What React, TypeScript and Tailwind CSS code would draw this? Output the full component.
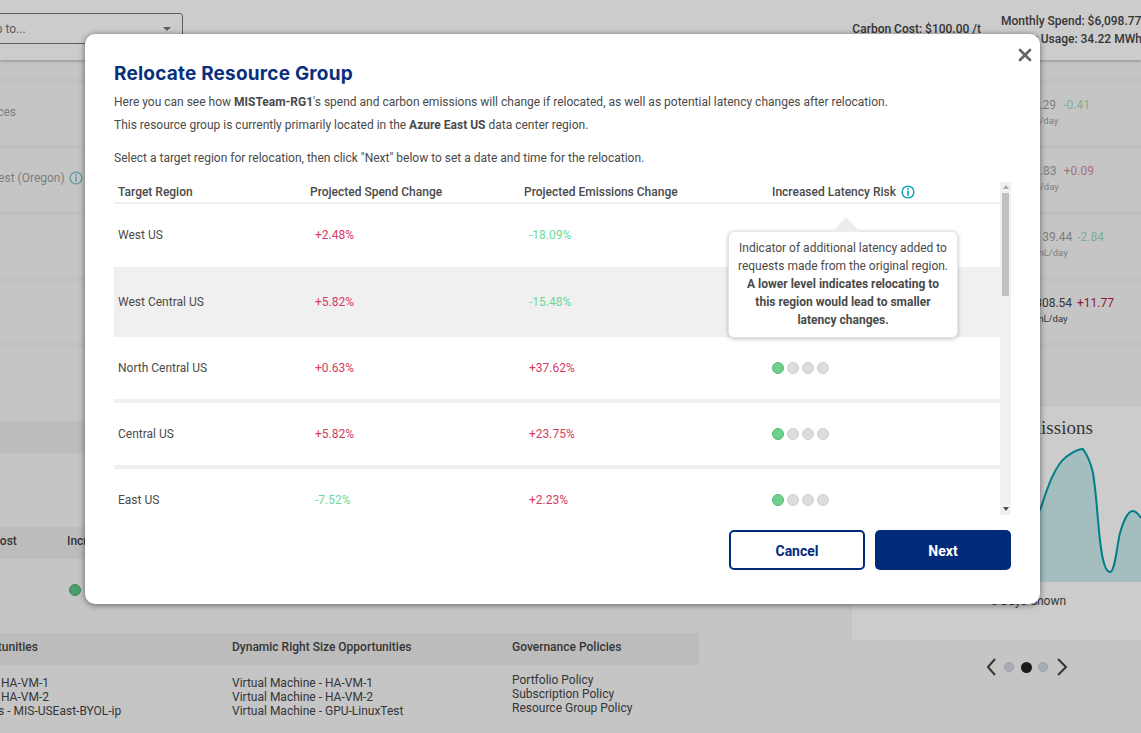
import React from 'react';
import { X } from 'lucide-react';

const regions = [
    { name: "West US", spend: "+2.48%", emissions: "-18.09%", row: "h-[63px] pb-[2px]" },
    { name: "West Central US", spend: "+5.82%", emissions: "-15.48%", row: "h-[70px] bg-[#f0f0f0]" },
    { name: "North Central US", spend: "+0.63%", emissions: "+37.62%", row: "h-[66px] border-b-4 border-[#f0f0f0]" },
    { name: "Central US", spend: "+5.82%", emissions: "+23.75%", row: "h-[66px] border-b-4 border-[#f0f0f0]" },
    { name: "East US", spend: "-7.52%", emissions: "+2.23%", row: "h-[66px] border-b-4 border-[#f0f0f0]" },
];

const summary = [
    { value: "28.29", delta: "-0.41", unit: "mL/day", faded: true, pad: "pr-[51px]", up: false },
    { value: "41.83", delta: "+0.09", unit: "mL/day", faded: true, pad: "pr-[47px]", up: true },
    { value: "139.44", delta: "-2.84", unit: "mL/day", faded: true, pad: "pr-[37px]", up: false },
    { value: "308.54", delta: "+11.77", unit: "mL/day", faded: false, pad: "pr-[27px]", up: true },
];

function InfoIcon({ className }: { className?: string }) {
    return (
        <svg width="14" height="14" viewBox="0 0 14 14" className={className}>
            <circle cx="7" cy="7" r="5.9" fill="none" stroke="currentColor" strokeWidth="1.4" />
            <rect x="6.2" y="3" width="1.6" height="1.6" fill="currentColor" />
            <rect x="6.2" y="5.6" width="1.6" height="5.2" fill="currentColor" />
        </svg>
    );
}

function Change({ value }: { value: string }) {
    const color = value.startsWith("+") ? "text-[#d63c64]" : "text-[#6fd896]";
    return <span className={`${color} pl-[5px]`}>{value}</span>;
}

function LatencyDots() {
    return (
        <div className="flex gap-[3px]">
            <span className="w-3 h-3 rounded-full bg-[#6fd08c] border border-[#55b873]"></span>
            <span className="w-3 h-3 rounded-full bg-[#dcdcdc] border border-[#cfcfcf]"></span>
            <span className="w-3 h-3 rounded-full bg-[#dcdcdc] border border-[#cfcfcf]"></span>
            <span className="w-3 h-3 rounded-full bg-[#dcdcdc] border border-[#cfcfcf]"></span>
        </div>
    );
}

function Background() {
    return (
        <div className="w-full h-full bg-[#f7f7f7] text-[#444]">
            <header className="h-[60px] bg-white shadow-[0_1px_3px_rgba(0,0,0,0.3)] flex items-start relative">
                <div className="-ml-[40px] mt-[13px] w-[223px] h-[31px] border border-[#777] rounded-[3px] flex items-center justify-between pl-[11px] pr-[11px] text-[12px] text-[#777]">
                    <span>Jump to...</span>
                    <span className="w-0 h-0 border-x-[4px] border-x-transparent border-t-[4px] border-t-[#777]"></span>
                </div>
                <div className="ml-auto mt-[20px] mr-[20px] text-[12px] font-medium whitespace-nowrap">Carbon Cost: $100.00 /t</div>
                <div className="-mr-[20px] mt-[12px] w-[160px] text-[12px] font-medium leading-[18px] whitespace-nowrap">
                    <div>Monthly Spend: $6,098.77</div>
                    <div>Energy Usage: 34.22 MWh</div>
                </div>
            </header>
            <div className="pt-[19px]">
                {summary.map((s, i) => (
                    <div key={i} className={`h-[66px] border-t-4 border-[#f0f0f0] flex justify-between items-start pt-[14px] ${s.pad}`}>
                        <div className={`pt-[6px] text-[12px] ${s.faded ? "opacity-50" : ""}`}>
                            {i === 0 && <span className="-ml-[92px] inline-block">Compute Resources</span>}
                            {i === 1 && <span className="-ml-[64px] inline-flex items-center gap-[4px] whitespace-nowrap">Azure US West (Oregon) <InfoIcon className="text-[#0097a7]" /></span>}
                        </div>
                        <div className={`flex gap-[5px] text-[12px] leading-[16px] ${s.faded ? "opacity-50" : ""}`}>
                            <div>
                                <div>{s.value}</div>
                                <div className="mt-[1px] text-[9.5px] leading-[14px]">{s.unit}</div>
                            </div>
                            <div className={s.up ? "text-[#b5173f]" : "text-[#4cbd72]"}>{s.delta}</div>
                        </div>
                    </div>
                ))}
                <div className="h-[4px] bg-[#f0f0f0]"></div>
            </div>
            <div className="flex">
                <div className="w-[852px] shrink-0">
                    <div className="mt-[74px] h-[32px] bg-[#ececec]"></div>
                    <div className="mt-[74px] h-[32px] pb-[4px] bg-[#ececec] flex items-center text-[12px] font-medium">
                        <span className="-ml-[8px] w-[75px]">Cost</span>
                        <span>Increased Latency Risk</span>
                    </div>
                    <div className="mt-[25px] pl-[69px] h-[49px]">
                        <span className="block w-3 h-3 rounded-full bg-[#5fc585] border border-[#4aa86c]"></span>
                    </div>
                    <div className="w-[699px]">
                        <div className="h-[32px] pb-[4px] bg-[#ececec] flex items-center text-[12px] font-medium whitespace-nowrap">
                            <span className="-ml-[92px] w-[324px]">Right Size Opportunities</span>
                            <span className="w-[280px]">Dynamic Right Size Opportunities</span>
                            <span>Governance Policies</span>
                        </div>
                        <div className="flex pt-[8px] text-[12px] leading-[14px] whitespace-nowrap">
                            <div className="-ml-[92px] w-[324px] pt-[3px]">
                                <div>Virtual Machine - HA-VM-1</div>
                                <div>Virtual Machine - HA-VM-2</div>
                                <div>Network Adapters - MIS-USEast-BYOL-ip</div>
                            </div>
                            <div className="w-[280px] pt-[3px]">
                                <div>Virtual Machine - HA-VM-1</div>
                                <div>Virtual Machine - HA-VM-2</div>
                                <div>Virtual Machine - GPU-LinuxTest</div>
                            </div>
                            <div>
                                <div>Portfolio Policy</div>
                                <div>Subscription Policy</div>
                                <div>Resource Group Policy</div>
                            </div>
                        </div>
                    </div>
                </div>
                <div className="flex-1">
                    <div className="mt-[60px] h-[233px] bg-white">
                        <div className="pt-[11px] pl-[102px] font-['Liberation_Serif',serif] text-[19px] leading-[20px] whitespace-nowrap text-[#444]">Carbon Emissions</div>
                        <svg width="289" height="142" viewBox="0 0 289 142" className="block mt-[2px]">
                            <path d="M0 120 C60 110 140 130 188 70 C192 60 200 28 214 17 C222 11 226 9 231 9 C236 16 239 24 241 33 C244 52 245 70 246 80 C248 105 251 132 258 132 C263 132 265 105 268 93 C271 83 275 71 281 71 C284 71 287 75 289 78 L289 142 L0 142 Z" fill="#ceeef0" />
                            <path d="M0 120 C60 110 140 130 188 70 C192 60 200 28 214 17 C222 11 226 9 231 9 C236 16 239 24 241 33 C244 52 245 70 246 80 C248 105 251 132 258 132 C263 132 265 105 268 93 C271 83 275 71 281 71 C284 71 287 75 289 78" fill="none" stroke="#009fac" strokeWidth="2" />
                        </svg>
                        <div className="pt-[10px] pl-[139px] text-[12px]">0 Days Shown</div>
                    </div>
                    <div className="mt-[18px] flex items-center pl-[135px] text-[#444]">
                        <svg width="9" height="18" viewBox="0 0 9 18" className="mr-[8px]"><polyline points="8,1 1,9 8,17" fill="none" stroke="currentColor" strokeWidth="2" /></svg>
                        <span className="w-[10px] h-[10px] rounded-full bg-[#d2d8e6] border border-[#c4c8d2]"></span>
                        <span className="ml-[7px] mr-[6px] w-[11px] h-[11px] rounded-full bg-[#222]"></span>
                        <span className="w-[10px] h-[10px] rounded-full bg-[#d2d8e6] border border-[#c4c8d2]"></span>
                        <svg width="10" height="18" viewBox="0 0 10 18" className="ml-[9px]"><polyline points="1,1 9,9 1,17" fill="none" stroke="currentColor" strokeWidth="2" /></svg>
                    </div>
                </div>
            </div>
        </div>
    );
}

export default function App() {
    return (
        <div className="relative w-[1141px] h-[733px] overflow-hidden font-[Roboto,sans-serif]">
            <Background />
            <div className="absolute inset-0 bg-black/20"></div>
            <div className="absolute left-[85px] top-[34px] w-[955px] h-[570px] bg-white rounded-[10px] shadow-[0_1px_6px_rgba(0,0,0,0.5)] pt-[29px] px-[29px] text-[12px] text-[#4a4a4a]">
                <X size={20} strokeWidth={3.2} className="absolute right-[5px] top-[11px] text-[#666]" />
                <h2 className="font-[Inter,sans-serif] font-bold text-[19px] leading-[22px] tracking-[0.2px] text-[#0a2f7d]">Relocate Resource Group</h2>
                <p className="mt-[6px] leading-[23px]">Here you can see how <b className="font-bold">MISTeam-RG1</b>'s spend and carbon emissions will change if relocated, as well as potential latency changes after relocation.</p>
                <p className="leading-[23px]">This resource group is currently primarily located in the <b className="font-bold">Azure East US</b> data center region.</p>
                <p className="mt-[10px] leading-[23px]">Select a target region for relocation, then click "Next" below to set a date and time for the relocation.</p>
                <div className="mt-[12px] flex h-[333px] relative">
                    <div className="flex-1 overflow-hidden">
                        <div className="h-[22px] border-b-2 border-[#f0f0f0] grid grid-cols-[192px_214px_248px_1fr] items-center pl-[4px] font-medium text-[#4a4a4a]">
                            <span>Target Region</span>
                            <span>Projected Spend Change</span>
                            <span>Projected Emissions Change</span>
                            <span className="flex items-center gap-[5px]">Increased Latency Risk <InfoIcon className="text-[#00a3b4]" /></span>
                        </div>
                        {regions.map((r, i) => (
                            <div key={r.name} className={`${r.row} grid grid-cols-[192px_214px_248px_1fr] items-center pl-[4px]`}>
                                <span>{r.name}</span>
                                <Change value={r.spend} />
                                <Change value={r.emissions} />
                                {i > 1 && <LatencyDots />}
                            </div>
                        ))}
                    </div>
                    <div className="w-[11px] bg-[#f1f1f1] relative flex flex-col items-center">
                        <span className="mt-[3px] w-0 h-0 border-x-[3px] border-x-transparent border-b-[4px] border-b-[#a8a8a8]"></span>
                        <span className="mt-[4px] w-[7px] h-[103px] bg-[#c1c1c1]"></span>
                        <span className="mt-auto mb-[4px] w-0 h-0 border-x-[3px] border-x-transparent border-t-[4px] border-t-[#505050]"></span>
                    </div>
                    <div className="absolute left-[614px] top-[49px] w-[230px] h-[107px] pb-[2px] bg-white border border-[#e4e4e4] rounded-[6px] shadow-[0_1px_4px_rgba(0,0,0,0.25)] flex flex-col justify-center text-center leading-[18px] text-[12px]">
                        <span>Indicator of additional latency added to requests made from the original region.</span>
                        <b className="font-bold px-[12px]">A lower level indicates relocating to this region would lead to smaller latency changes.</b>
                        <span className="absolute -top-[15px] left-[103px] w-0 h-0 border-x-[14px] border-x-transparent border-b-[15px] border-b-[#ededed]"></span>
                    </div>
                </div>
                <div className="mt-[15px] flex justify-end gap-[10px] text-[14px] font-bold">
                    <button className="w-[136px] h-[40px] pt-[2px] border-2 border-[#002b7a] rounded-[5px] text-[#002b7a] bg-white">Cancel</button>
                    <button className="w-[136px] h-[40px] pt-[2px] rounded-[5px] bg-[#002b7a] text-white">Next</button>
                </div>
            </div>
        </div>
    );
}
